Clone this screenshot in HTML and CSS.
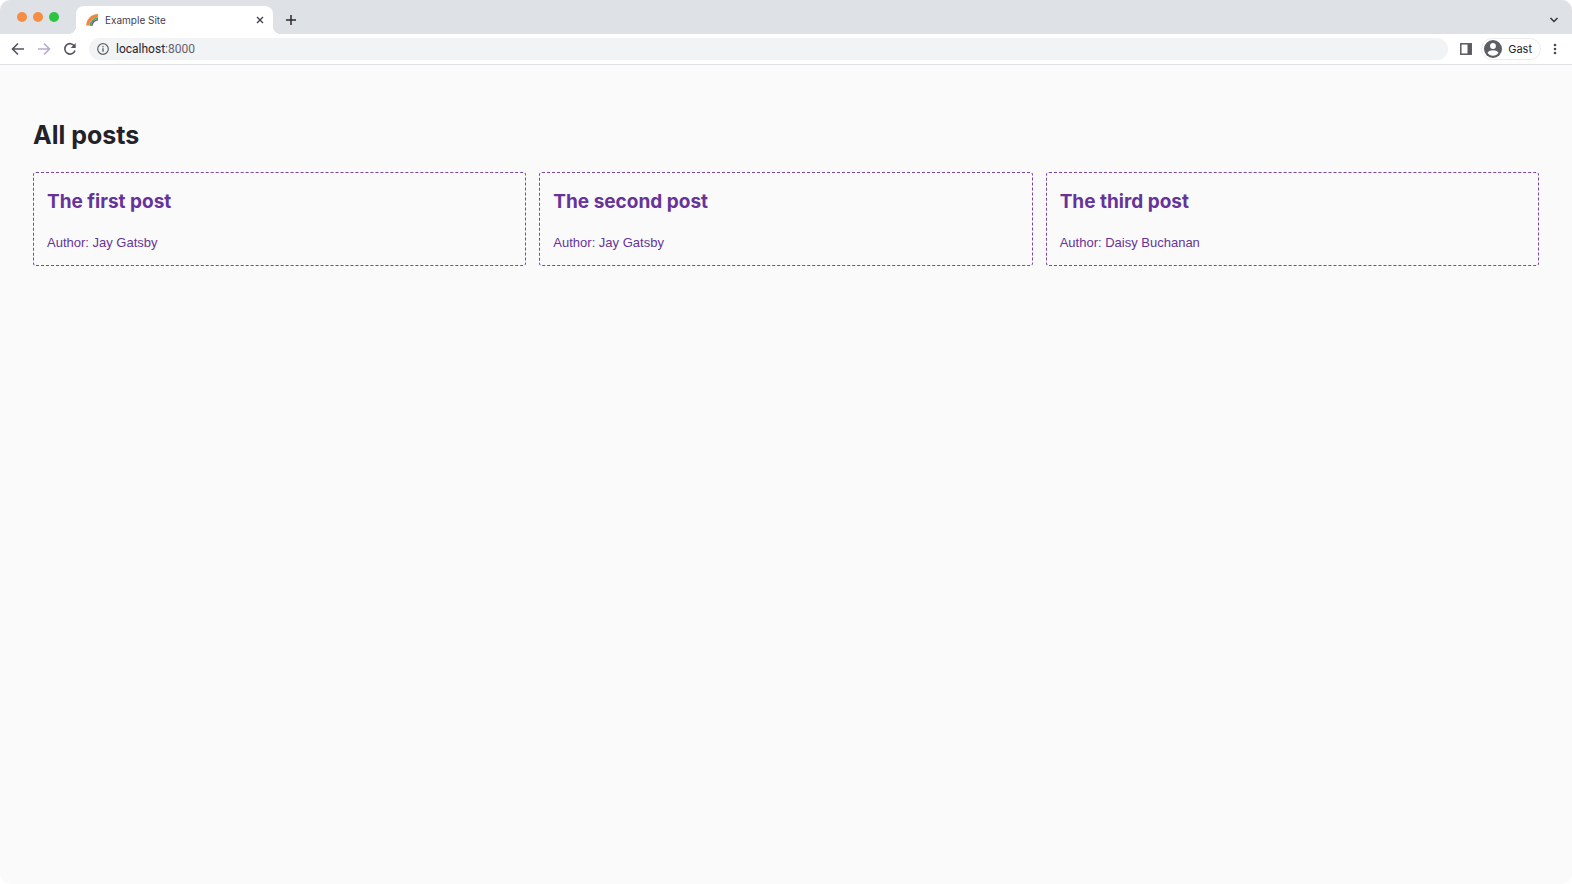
FILE: index.html
```html
<!DOCTYPE html>
<html lang="en">
<head>
    <meta charset="UTF-8">
    <meta name="viewport" content="width=device-width, initial-scale=1.0">
    <title>Example Site</title>
    <link rel="stylesheet" href="styles.css">
</head>
<body>
    <div class="window">
        <header class="tab-strip">
            <div class="lights">
                <span class="light"></span>
                <span class="light"></span>
                <span class="light green"></span>
            </div>
            <div class="tab">
                <svg class="favicon" width="12" height="12" viewBox="0 0 12 12" fill="none">
                    <path d="M1.800 11.500C2 6.500 6 2 12 1.800" stroke="#f4853c" stroke-width="3.500"/>
                    <path d="M4.300 11.800C4.500 8 7.500 4.500 12 4.300" stroke="#35b34a" stroke-width="1.600"/>
                    <path d="M5.800 12C6 9 8.500 6 12 5.800" stroke="#70509a" stroke-width="1.500"/>
                </svg>
                <span class="tab-title">Example Site</span>
                <button class="icon-btn" aria-label="Close tab">
                    <svg width="8" height="8" viewBox="0 0 8 8"><path d="M1 1l6 6M7 1L1 7" stroke="#45404f" stroke-width="1.400"/></svg>
                </button>
            </div>
            <button class="icon-btn new-tab" aria-label="New tab">
                <svg width="10" height="10" viewBox="0 0 10 10"><path d="M5 0v10M0 5h10" stroke="#2a2730" stroke-width="1.500"/></svg>
            </button>
            <button class="icon-btn tab-search" aria-label="Search tabs">
                <svg width="10" height="10" viewBox="0 0 10 10" fill="none"><path d="M1.500 3L5 6.500 8.500 3" stroke="#37323f" stroke-width="1.500"/></svg>
            </button>
        </header>

        <nav class="toolbar">
            <button class="icon-btn" aria-label="Back">
                <svg width="14" height="14" viewBox="0 0 14 14" fill="none" stroke="#55525c" stroke-width="1.600"><path d="M13 7H2M7 1.500L1.500 7 7 12.500"/></svg>
            </button>
            <button class="icon-btn" aria-label="Forward">
                <svg width="14" height="14" viewBox="0 0 14 14" fill="none" stroke="#b9aacb" stroke-width="1.600"><path d="M1 7h11M7 1.500L12.500 7 7 12.500"/></svg>
            </button>
            <button class="icon-btn" aria-label="Reload">
                <svg width="14" height="14" viewBox="0 0 14 14" fill="none"><path d="M11.500 4.200A5.200 5.200 0 1 0 12 8.400" stroke="#55525c" stroke-width="1.600"/><path d="M12.700 1v5H7.700z" fill="#55525c"/></svg>
            </button>
            <div class="address">
                <svg width="12" height="12" viewBox="0 0 12 12" fill="none" stroke="#5f6368"><circle cx="6" cy="6" r="5.300" stroke-width="1.200"/><path d="M6 5.300v3.500M6 3v1.300" stroke-width="1.400"/></svg>
                <span class="url">localhost<span class="port">:8000</span></span>
            </div>
            <div class="actions">
                <button class="icon-btn" aria-label="Side panel">
                    <svg width="12" height="12" viewBox="0 0 12 12"><rect x=".8" y=".8" width="10.400" height="10.400" fill="none" stroke="#5b5a60" stroke-width="1.500"/><path d="M7.500 1H11v10H7.500z" fill="#5b5a60"/></svg>
                </button>
                <button class="profile">
                    <svg width="18" height="18" viewBox="0 0 18 18"><circle cx="9" cy="9" r="9" fill="#5b5e62"/><circle cx="9" cy="6" r="2.900" fill="#fff"/><path d="M3.500 12.800C4.300 10.900 7 10.200 9 10.200s4.700.7 5.500 2.600C13.300 14.700 11.200 15.700 9 15.700s-4.300-1-5.500-2.900z" fill="#fff"/></svg>
                    Gast
                </button>
                <button class="icon-btn menu" aria-label="Menu">
                    <svg width="4" height="12" viewBox="0 0 4 12" fill="#4b4753"><circle cx="2" cy="2" r="1.300"/><circle cx="2" cy="6" r="1.300"/><circle cx="2" cy="10" r="1.300"/></svg>
                </button>
            </div>
        </nav>

        <main class="page">
            <h1>All posts</h1>
            <section class="posts">
                <a class="post" href="#first">
                    <h2>The first post</h2>
                    <p>Author: Jay Gatsby</p>
                </a>
                <a class="post" href="#second">
                    <h2>The second post</h2>
                    <p>Author: Jay Gatsby</p>
                </a>
                <a class="post" href="#third">
                    <h2>The third post</h2>
                    <p>Author: Daisy Buchanan</p>
                </a>
            </section>
        </main>
    </div>
</body>
</html>
```

FILE: styles.css
```css
* { box-sizing: border-box; }
body { margin: 0; background: #fff; font-family: Inter, sans-serif; }
h1, h2, p { margin: 0; }
button { font-family: inherit; padding: 0; border: none; background: none; }
svg { display: block; flex: none; }

.window { display: flex; flex-direction: column; min-height: 100vh; border-radius: 10px; overflow: hidden; background: #fafafa; }

/* tabs */
.tab-strip { display: flex; align-items: center; height: 34px; padding: 0 13px 0 17px; background: #dee1e6; }
.lights { display: flex; gap: 6px; width: 59px; }
.light { width: 10px; height: 10px; border-radius: 50%; background: #f68d45; }
.light.green { background: #2ec440; }
.tab { position: relative; display: flex; align-items: center; align-self: flex-end; gap: 7px; width: 197px; height: 28px; padding: 0 8px 0 10px; border-radius: 8px 8px 0 0; background: #fff; }
.tab::before, .tab::after { content: ""; position: absolute; bottom: 0; width: 8px; height: 8px; }
.tab::before { right: 100%; background: radial-gradient(circle at 0 0, transparent 8px, #fff 8px); }
.tab::after { left: 100%; background: radial-gradient(circle at 100% 0, transparent 8px, #fff 8px); }
.tab-title { flex: 1; font-size: 10px; color: #45404f; }
.icon-btn { display: flex; align-items: center; justify-content: center; min-width: 10px; height: 14px; }
.new-tab { margin: 6px 0 0 13px; }
.tab-search { margin: 6px 0 0 auto; }

/* address bar */
.toolbar { display: flex; align-items: center; gap: 12px; height: 31px; padding: 0 12px 0 11px; border-bottom: 1px solid #dfe0e3; background: #fff; }
.address { display: flex; flex: 1; align-items: center; gap: 7px; height: 22px; padding: 0 8px; border-radius: 11px; background: #f1f3f4; }
.url { font-family: Roboto, sans-serif; font-size: 12px; color: #28242e; }
.port { color: #65616c; }
.actions { display: flex; align-items: center; gap: 9px; }
.profile { display: flex; align-items: center; gap: 6px; height: 22px; padding: 0 8px 0 2px; border: 1px solid #ececf0; border-radius: 11px; font-size: 11px; color: #28242e; }

/* posts */
.page { flex: 1; padding: 54px 33px 33px; }
h1 { margin-bottom: 20px; font-size: 25px; line-height: 33px; color: #232129; }
.posts { display: grid; grid-template-columns: repeat(3, 1fr); gap: 13px; }
.post { padding: 13px; border: 1px dashed #7845a8; border-radius: 3px; color: #663399; text-decoration: none; }
h2 { margin-bottom: 15px; font-size: 19px; line-height: 32px; }
.post p { font-family: "Liberation Sans", sans-serif; font-size: 13px; line-height: 19px; }
```
